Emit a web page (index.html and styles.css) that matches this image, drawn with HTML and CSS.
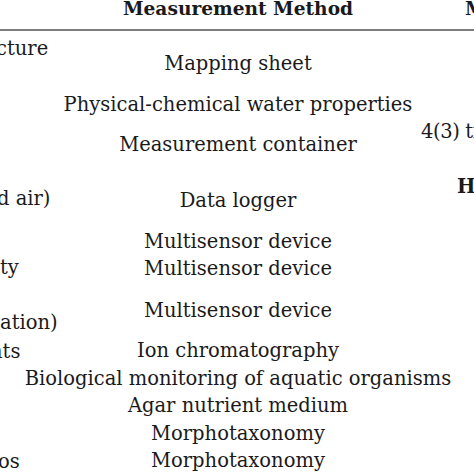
FILE: index.html
```html
<!DOCTYPE html>
<html lang="en">
<head>
<meta charset="utf-8">
<title>Measurement methods table</title>
<link rel="stylesheet" href="styles.css">
</head>
<body>
<div class="table">
  <div class="head">
    <div class="col-left"></div>
    <div class="col-mid"><span class="line">Measurement Method</span></div>
    <div class="col-right"><span class="line head-m">M</span></div>
  </div>
  <div class="body">
    <div class="col-left">
      <div class="line l-1 cut-c">cture</div>
      <div class="line l-2 cut-d">d air)</div>
      <div class="line l-3">ty</div>
      <div class="line l-4">ation)</div>
      <div class="line l-5 cut-n">nts</div>
      <div class="line l-6 cut-o">os</div>
    </div>
    <div class="col-mid">
      <div class="line m-first">Mapping sheet</div>
      <div class="line gap-14">Physical-chemical water properties</div>
      <div class="line gap-13">Measurement container</div>
      <div class="line gap-29">Data logger</div>
      <div class="line gap-14">Multisensor device</div>
      <div class="line">Multisensor device</div>
      <div class="line gap-15">Multisensor device</div>
      <div class="line gap-13">Ion chromatography</div>
      <div class="line gap-1">Biological monitoring of aquatic organisms</div>
      <div class="line">Agar nutrient medium</div>
      <div class="line gap-1">Morphotaxonomy</div>
      <div class="line">Morphotaxonomy</div>
    </div>
    <div class="col-right">
      <div class="line r-1">4(3) ti</div>
      <div class="line r-2">H</div>
    </div>
  </div>
</div>
</body>
</html>
```
FILE: styles.css
```css
html, body {
  margin: 0;
  padding: 0;
  width: 474px;
  height: 474px;
  overflow: hidden;
  background: #ffffff;
}

body {
  font-family: "DejaVu Serif", "Liberation Serif", serif;
  font-size: 19.5px;
  color: #1a1a1a;
}

.table {
  width: 474px;
}

.head,
.body {
  display: grid;
  grid-template-columns: 60px 1fr 58px;
}

.head {
  margin-top: -3px;
  padding-bottom: 8px;
  border-bottom: 2px solid #7d7d7d;
  line-height: 24px;
  font-size: 18.6px;
  font-weight: bold;
}

.body {
  line-height: 27px;
}

.col-left,
.col-right {
  display: flex;
  flex-direction: column;
  align-items: flex-start;
  min-width: 0;
}

.col-mid {
  display: flex;
  flex-direction: column;
  align-items: center;
  min-width: 0;
}

.line {
  white-space: nowrap;
}

.head-m {
  margin-left: 49px;
}

/* left column fragments */
.l-1 { margin-top: 4px; }
.l-2 { margin-top: 123px; }
.l-3 { margin-top: 42px; }
.l-4 { margin-top: 28px; }
.l-5 { margin-top: 2px; }
.l-6 { margin-top: 83px; }
.cut-c { margin-left: -4px; }
.cut-d { margin-left: -3px; }
.cut-n { margin-left: -10px; }
.cut-o { margin-left: -2px; }

/* middle column spacing */
.m-first { margin-top: 19px; }
.gap-1 { margin-top: 1px; }
.gap-13 { margin-top: 13px; }
.gap-14 { margin-top: 14px; }
.gap-15 { margin-top: 15px; }
.gap-29 { margin-top: 29px; }

/* right column */
.r-1 {
  margin-top: 87px;
  margin-left: 5px;
  letter-spacing: -0.4px;
}

.r-2 {
  margin-top: 28px;
  margin-left: 41px;
  font-weight: bold;
}
```
